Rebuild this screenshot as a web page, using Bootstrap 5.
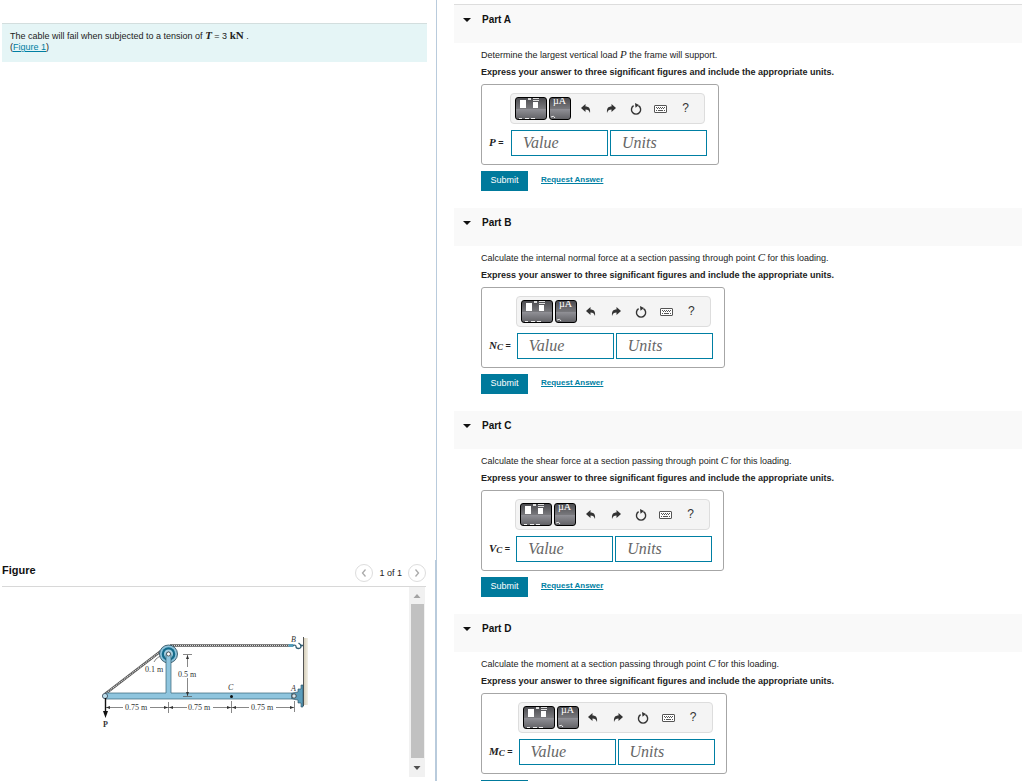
<!DOCTYPE html>
<html lang="en">
<head>
<meta charset="utf-8">
<meta name="viewport" content="width=device-width, initial-scale=1">
<title>Frame and cable problem</title>
<link href="https://cdn.jsdelivr.net/npm/bootstrap@5.3.0/dist/css/bootstrap.min.css" rel="stylesheet">
<script src="https://cdn.jsdelivr.net/npm/bootstrap@5.3.0/dist/js/bootstrap.bundle.min.js" defer></script>
<style>
  body { font-family: "Liberation Sans", Arial, sans-serif; font-size: 9px; line-height: 11px; color: #222; background: #fff; }
  a { color: #007fa3; }
  .math { font-family: "Liberation Serif", "Times New Roman", serif; font-size: 11px; line-height: 0; font-weight: 700; }
  .math sub { font-size: 9px; bottom: -1px; font-style: italic; }
  .thin { font-weight: 400; }
  .problem { flex: 0 0 437px; border-right: 1px solid #b9cbdc; }
  .intro { margin: 23px 9px 0 2px; padding: 7px 8px 8px; background: #e5f5f6; border-top: 1px solid #d3dede; min-height: 39px; }
  .figure-panel { border-right: 1px solid #b9cbdc; padding: 0 9px 4px 0; }
  .figure-bar { height: 27px; margin-left: 2px; border-bottom: 1px solid #d8d8d8; }
  .figure-bar h2 { font-size: 11px; line-height: 20px; color: #111; }
  .pager { font-size: 9px; }
  .pager span { padding: 0 6px; }
  .pager button { width: 18px; height: 18px; border: 1px solid #ddd; border-radius: 50%; background: #fff; }
  .view { height: 190px; }
  .drawing { margin: 38px 0 0 90px; }
  .track { width: 16px; background: #f1f1f1; margin-right: 1px; }
  .track span { background: #c1c1c1; width: 13px; }
  .answers { padding: 4px 0 0 17px; }
  .part-head { height: 38px; margin-top: 17px; background: #f9f9f9; padding: 5px 9px; gap: 11px; }
  .part-head:first-child { height: 39px; margin-top: 0; border-top: 1px solid #ddd; }
  .part-head h2 { font-size: 10px; line-height: 20px; color: #111; }
  .part-body { padding: 6px 8px 0 27px; }
  .part-body p { line-height: 13px; margin-bottom: 4px; white-space: nowrap; }
  .part-body p + p { margin-bottom: 5px; }
  .entry { border: 1px solid #a6a6a6; border-radius: 3px; padding: 8px 11px 8px 7px; }
  .entry label { min-width: 16px; line-height: 26px; margin-right: 6px; white-space: nowrap; font-weight: 700; }
  .tools { width: 195px; height: 31px; padding: 0 4px; background: #f4f4f4; border: 1px solid #ddd; border-radius: 4px; margin: 0 0 6px -1px; }
  .tools button { border: 0; background: none; padding: 0; width: 25px; height: 23px; color: #333; }
  .tools .dark { border: 1px solid #000; border-radius: 3px; margin-right: 2px; overflow: hidden; background: linear-gradient(#4c4c50, #77777b 50%, #929298 51%, #626266); width: 22px; }
  .tools .wide { width: 32px; }
  .tools .ask { font-size: 12px; line-height: 23px; }
  .fields { gap: 2px; }
  .field { width: 97px; height: 26px; border: 1px solid #007fa3; border-radius: 0; padding: 0 0 0 11px; font: italic 16px/24px "Liberation Serif", "Times New Roman", serif; }
  .field::placeholder { color: #666; opacity: 1; }
  .actions { margin-top: 6px; }
  .submit { width: 47px; height: 20px; border: 0; background: #007a9c; color: #fff; font-size: 9px; line-height: 18px; padding: 0 0 2px; }
  .request { font-size: 8px; line-height: 18px; font-weight: 700; margin-left: 13px; }
</style>
</head>
<body>
<svg class="d-none" aria-hidden="true">
  <symbol id="tpl" viewBox="0 0 30 21"><path d="M4 2h6v8H4zM17 4h5v6h-5z" fill="#fff"/><path d="M12 0h3v2h-3zM17 0h6v1h-6zM17 2h6v1h-6z" fill="#ddd"/><path d="M3 20h3v1H3zM9 20h4v1H9zM15 20h4v1h-4z" fill="#eee"/></symbol>
  <symbol id="undo" viewBox="0 0 10 10"><path d="M0 4L4.500 0v2.500c3.500 0 5 2 4.500 6.500C8.200 6.600 7 5.500 4.500 5.500v2.500z" fill="#333"/></symbol>
  <symbol id="redo" viewBox="0 0 10 10"><path d="M10 4L5.500 0v2.500C2 2.500.5 4.500 1 9 1.800 6.600 3 5.500 5.500 5.500v2.500z" fill="#333"/></symbol>
  <symbol id="reset" viewBox="0 0 12 12"><path d="M8.500 2.600a4.600 4.600 0 1 1-4.900 0" fill="none" stroke="#333" stroke-width="1.400"/><path d="M5 0L9 2 5.500 4.800z" fill="#333"/></symbol>
  <symbol id="keys" viewBox="0 0 13 8"><rect x=".5" y=".5" width="12" height="7" rx=".5" fill="#fff" stroke="#555"/><path d="M2 2.500h9M3 3.500h8" stroke="#555" stroke-dasharray="1 1"/><path d="M2 5.500h1M4 5.500h5M10 5.500h1" stroke="#555"/></symbol>
  <symbol id="units" viewBox="0 0 20 21"><text x="3" y="6" font-family="Liberation Serif, serif" font-size="10" fill="#fff">µA</text><path d="M1 19q3-2 4 1" fill="none" stroke="#eee"/></symbol>
  <symbol id="caret" viewBox="0 0 8 4"><path d="M0 0h8L4 4z" fill="#111"/></symbol>
</svg>

<div class="d-flex vh-100 overflow-hidden">
  <section class="problem d-flex flex-column">
    <div class="intro">
      The cable will fail when subjected to a tension of <span class="math"><i>T</i></span> = 3 <span class="math">kN</span> .<br>(<a href="#figure">Figure 1</a>)
    </div>
    <div id="figure" class="figure-panel mt-auto">
      <div class="figure-bar d-flex justify-content-between">
        <h2 class="fw-bold m-0">Figure</h2>
        <div class="pager d-flex align-items-center">
          <button type="button" class="p-0 d-flex align-items-center justify-content-center" aria-label="Previous figure"><svg width="8" height="10" viewBox="0 0 8 10"><path d="M5.500 1.500L2.500 5l3 3.500" fill="none" stroke="#aaa" stroke-width="1.300"/></svg></button>
          <span>1 of 1</span>
          <button type="button" class="p-0 d-flex align-items-center justify-content-center" aria-label="Next figure"><svg width="8" height="10" viewBox="0 0 8 10"><path d="M2.500 1.500l3 3.500-3 3.500" fill="none" stroke="#aaa" stroke-width="1.300"/></svg></button>
        </div>
      </div>
      <div class="view d-flex justify-content-between">
        <svg class="drawing" width="240" height="110" viewBox="0 0 240 110" font-family="Liberation Serif, serif" font-size="8" fill="#333">
          <defs><linearGradient id="wall"><stop stop-color="#cfc6ae"/><stop offset="1" stop-color="#f3f0e6"/></linearGradient></defs>
          <rect x="213" y="13" width="5" height="67" fill="url(#wall)"/><path d="M213.500 12v69" stroke="#555"/>
          <g fill="none"><path d="M15 69L71 26M80 20.500H199" stroke="#555" stroke-width="2.600"/><path d="M15 69L71 26M80 20.500H199" stroke="#ddd" stroke-width="1.200" stroke-dasharray="1 1"/></g>
          <circle cx="78.500" cy="29" r="9" fill="#8fc3db" stroke="#245" stroke-width=".8"/><circle cx="78.500" cy="29" r="6.800" fill="#146b8b"/><circle cx="78.500" cy="29" r="4.500" fill="#a8d0e2"/>
          <path d="M76 68V30q0-3 2.500-3t2.500 3v38H202v6H16v-6z" fill="#8fc5de" stroke="#356376" stroke-width=".7"/>
          <circle cx="78.500" cy="29" r="2" fill="#fff" stroke="#333" stroke-width=".7"/>
          <circle cx="15" cy="71" r="2.600" fill="#bdddea" stroke="#345" stroke-width=".8"/>
          <path d="M202 68l6-1v-3h3v-4h2v22h-2v-4h-3v-3l-6-1z" fill="#5c9dbb" stroke="#254b5d" stroke-width=".6"/>
          <circle cx="204" cy="71" r="2.200" fill="#d5e6ef" stroke="#333" stroke-width=".8"/>
          <rect x="198.500" y="19" width="5" height="3" fill="#559dba"/><path d="M203 20.500q3-1 3 1t2.500 2q3 0 2.500-3.500l-2.500-2M210 20.500h3" fill="none" stroke="#335e73" stroke-width="1.300"/>
          <circle cx="141.500" cy="71.500" r="1.500" fill="#111"/>
          <path d="M15.500 73v16" stroke="#111" stroke-width="1.400"/><path d="M13 86h5l-2.500 7z" fill="#111"/>
          <path d="M93 29.500h9M93 71.500h9M97.500 30v12m0 11v18M78.500 77v11M141.500 76v12M204.500 76v11M16 82.500h17M60 82.500h37M123 82.500h36M186 82.500h18M64 37q1-3 6-6" fill="none" stroke="#555" stroke-width=".7"/>
          <path d="M97.500 30l-1.500 4h3zM97.500 71l-1.500-4h3zM16 82.500l4-1.500v3zM78 82.500l-4-1.500v3zM79 82.500l4-1.500v3zM141 82.500l-4-1.500v3zM142 82.500l4-1.500v3zM204 82.500l-4-1.500v3z"/>
          <text x="55" y="47">0.1 m</text><text x="88" y="52">0.5 m</text>
          <text x="35" y="85">0.75 m</text><text x="98" y="85">0.75 m</text><text x="161" y="85">0.75 m</text>
          <text x="201" y="17" font-style="italic">B</text><text x="201" y="66" font-style="italic">A</text><text x="138" y="65" font-style="italic">C</text>
          <text x="13" y="102" font-weight="bold">P</text>
        </svg>
        <div class="track d-flex flex-column align-items-center justify-content-between">
          <svg width="16" height="17"><path d="M4.500 11h7L8 7z" fill="#a3a3a3"/></svg>
          <span class="flex-grow-1"></span>
          <svg width="16" height="19"><path d="M4.500 8h7L8 12z" fill="#505050"/></svg>
        </div>
      </div>
    </div>
  </section>

  <main class="answers flex-grow-1 overflow-hidden">
    <header class="part-head d-flex"><svg class="flex-shrink-0 mt-2" width="8" height="4"><use href="#caret"/></svg><h2 class="fw-bold mb-0">Part A</h2></header>
    <div class="part-body">
      <p>Determine the largest vertical load <span class="math thin"><i>P</i></span> the frame will support.</p>
      <p class="fw-bold">Express your answer to three significant figures and include the appropriate units.</p>
      <div class="entry d-inline-flex align-items-end align-top">
        <label for="va"><span class="math"><i>P</i></span> =</label>
        <div>
          <div class="tools d-flex align-items-center">
            <button type="button" class="dark wide" aria-label="Templates"><svg class="d-block" width="30" height="21"><use href="#tpl"/></svg></button><button type="button" class="dark" aria-label="Units symbols"><svg class="d-block" width="20" height="21"><use href="#units"/></svg></button>
            <button type="button" aria-label="Undo"><svg width="10" height="10"><use href="#undo"/></svg></button><button type="button" aria-label="Redo"><svg width="10" height="10"><use href="#redo"/></svg></button><button type="button" aria-label="Reset"><svg width="12" height="12"><use href="#reset"/></svg></button><button type="button" aria-label="Keyboard shortcuts"><svg width="13" height="8"><use href="#keys"/></svg></button><button type="button" class="ask" aria-label="Help">?</button>
          </div>
          <div class="fields d-flex"><input id="va" class="field" placeholder="Value"><input class="field" placeholder="Units" aria-label="Units of P"></div>
        </div>
      </div>
      <div class="actions d-flex"><button type="submit" class="submit">Submit</button><a class="request" href="#">Request Answer</a></div>
    </div>

    <header class="part-head d-flex"><svg class="flex-shrink-0 mt-2" width="8" height="4"><use href="#caret"/></svg><h2 class="fw-bold mb-0">Part B</h2></header>
    <div class="part-body">
      <p>Calculate the internal normal force at a section passing through point <span class="math thin"><i>C</i></span> for this loading.</p>
      <p class="fw-bold">Express your answer to three significant figures and include the appropriate units.</p>
      <div class="entry d-inline-flex align-items-end align-top">
        <label for="vb"><span class="math"><i>N</i><sub>C</sub></span> =</label>
        <div>
          <div class="tools d-flex align-items-center">
            <button type="button" class="dark wide" aria-label="Templates"><svg class="d-block" width="30" height="21"><use href="#tpl"/></svg></button><button type="button" class="dark" aria-label="Units symbols"><svg class="d-block" width="20" height="21"><use href="#units"/></svg></button>
            <button type="button" aria-label="Undo"><svg width="10" height="10"><use href="#undo"/></svg></button><button type="button" aria-label="Redo"><svg width="10" height="10"><use href="#redo"/></svg></button><button type="button" aria-label="Reset"><svg width="12" height="12"><use href="#reset"/></svg></button><button type="button" aria-label="Keyboard shortcuts"><svg width="13" height="8"><use href="#keys"/></svg></button><button type="button" class="ask" aria-label="Help">?</button>
          </div>
          <div class="fields d-flex"><input id="vb" class="field" placeholder="Value"><input class="field" placeholder="Units" aria-label="Units of N"></div>
        </div>
      </div>
      <div class="actions d-flex"><button type="submit" class="submit">Submit</button><a class="request" href="#">Request Answer</a></div>
    </div>

    <header class="part-head d-flex"><svg class="flex-shrink-0 mt-2" width="8" height="4"><use href="#caret"/></svg><h2 class="fw-bold mb-0">Part C</h2></header>
    <div class="part-body">
      <p>Calculate the shear force at a section passing through point <span class="math thin"><i>C</i></span> for this loading.</p>
      <p class="fw-bold">Express your answer to three significant figures and include the appropriate units.</p>
      <div class="entry d-inline-flex align-items-end align-top">
        <label for="vc"><span class="math"><i>V</i><sub>C</sub></span> =</label>
        <div>
          <div class="tools d-flex align-items-center">
            <button type="button" class="dark wide" aria-label="Templates"><svg class="d-block" width="30" height="21"><use href="#tpl"/></svg></button><button type="button" class="dark" aria-label="Units symbols"><svg class="d-block" width="20" height="21"><use href="#units"/></svg></button>
            <button type="button" aria-label="Undo"><svg width="10" height="10"><use href="#undo"/></svg></button><button type="button" aria-label="Redo"><svg width="10" height="10"><use href="#redo"/></svg></button><button type="button" aria-label="Reset"><svg width="12" height="12"><use href="#reset"/></svg></button><button type="button" aria-label="Keyboard shortcuts"><svg width="13" height="8"><use href="#keys"/></svg></button><button type="button" class="ask" aria-label="Help">?</button>
          </div>
          <div class="fields d-flex"><input id="vc" class="field" placeholder="Value"><input class="field" placeholder="Units" aria-label="Units of V"></div>
        </div>
      </div>
      <div class="actions d-flex"><button type="submit" class="submit">Submit</button><a class="request" href="#">Request Answer</a></div>
    </div>

    <header class="part-head d-flex"><svg class="flex-shrink-0 mt-2" width="8" height="4"><use href="#caret"/></svg><h2 class="fw-bold mb-0">Part D</h2></header>
    <div class="part-body">
      <p>Calculate the moment at a section passing through point <span class="math thin"><i>C</i></span> for this loading.</p>
      <p class="fw-bold">Express your answer to three significant figures and include the appropriate units.</p>
      <div class="entry d-inline-flex align-items-end align-top">
        <label for="vd"><span class="math"><i>M</i><sub>C</sub></span> =</label>
        <div>
          <div class="tools d-flex align-items-center">
            <button type="button" class="dark wide" aria-label="Templates"><svg class="d-block" width="30" height="21"><use href="#tpl"/></svg></button><button type="button" class="dark" aria-label="Units symbols"><svg class="d-block" width="20" height="21"><use href="#units"/></svg></button>
            <button type="button" aria-label="Undo"><svg width="10" height="10"><use href="#undo"/></svg></button><button type="button" aria-label="Redo"><svg width="10" height="10"><use href="#redo"/></svg></button><button type="button" aria-label="Reset"><svg width="12" height="12"><use href="#reset"/></svg></button><button type="button" aria-label="Keyboard shortcuts"><svg width="13" height="8"><use href="#keys"/></svg></button><button type="button" class="ask" aria-label="Help">?</button>
          </div>
          <div class="fields d-flex"><input id="vd" class="field" placeholder="Value"><input class="field" placeholder="Units" aria-label="Units of M"></div>
        </div>
      </div>
      <div class="actions d-flex"><button type="submit" class="submit" aria-label="Submit Part D"></button></div>
    </div>
  </main>
</div>
</body>
</html>
